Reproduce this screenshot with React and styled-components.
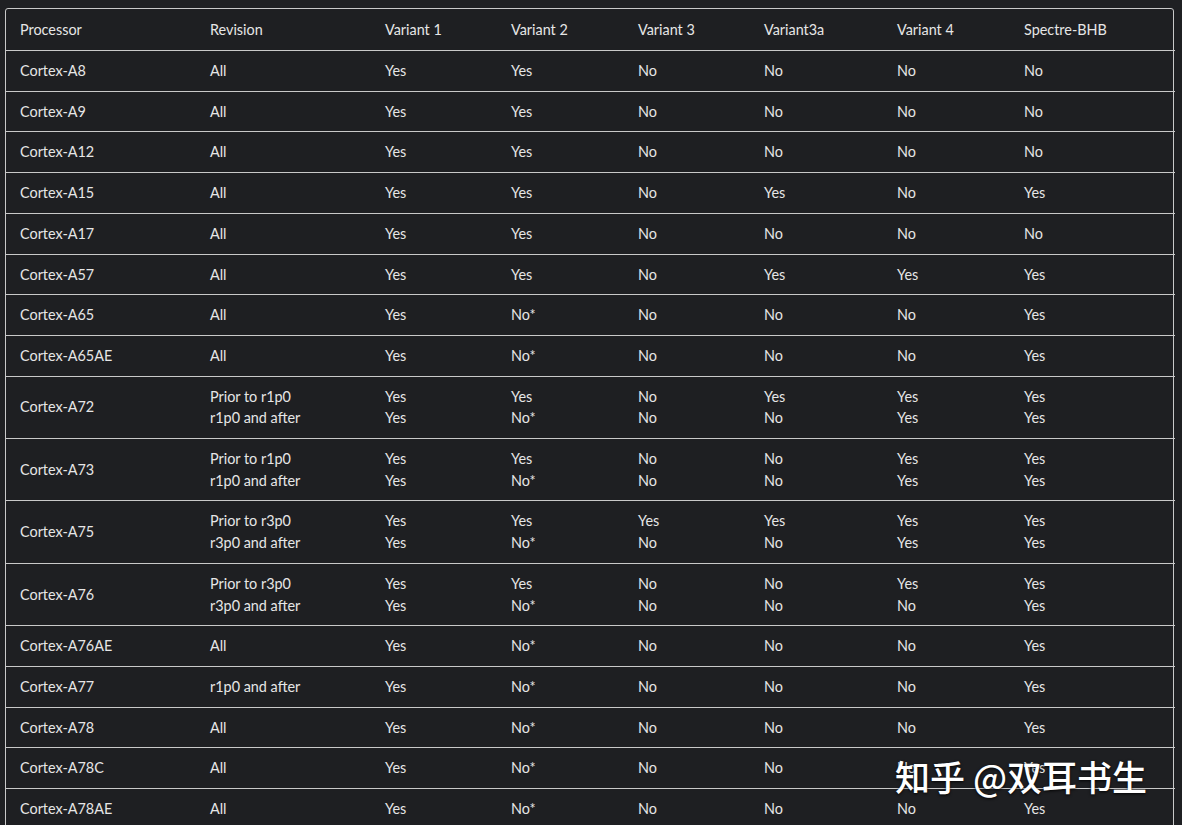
import React from "react";
import styled, { createGlobalStyle } from "styled-components";

const Global = createGlobalStyle`
  body { margin: 0; background: #1f2023; font-family: Lato, "Noto Sans", sans-serif; }
`;
const Page = styled.div`
  padding: 8px 8px 0 5px; height: 825px; box-sizing: border-box; overflow: hidden; position: relative;
`;
const Wrap = styled.div`
  border: 1px solid #c9c9c9; border-radius: 3px; background: #1e1f22;
`;
const Table = styled.table`
  border-collapse: collapse; width: 100%; table-layout: fixed;
  color: #e6e6e6; font-size: 14.4px;
`;
const Td = styled.td`
  padding: 9px 14px; line-height: 21.7px; vertical-align: middle;
  border-top: 1px solid #c9c9c9;
`;
const Th = styled.th`
  padding: 10px 14px; line-height: 21px; text-align: left; font-weight: 400;
`;
const Mark = styled.div`
  position: absolute; left: 895px; top: 750px;
  font-family: "Noto Sans CJK SC", sans-serif; font-size: 35px; font-weight: 500; color: #fff;
  text-shadow: 0 1px 3px rgba(0,0,0,0.9);
`;

const widths = [190, 175, 126, 127, 126, 133, 127, 165];
const head = ["Processor","Revision","Variant 1","Variant 2","Variant 3","Variant3a","Variant 4","Spectre-BHB"];
const rows = [
  ["Cortex-A8","All","Yes","Yes","No","No","No","No"],
  ["Cortex-A9","All","Yes","Yes","No","No","No","No"],
  ["Cortex-A12","All","Yes","Yes","No","No","No","No"],
  ["Cortex-A15","All","Yes","Yes","No","Yes","No","Yes"],
  ["Cortex-A17","All","Yes","Yes","No","No","No","No"],
  ["Cortex-A57","All","Yes","Yes","No","Yes","Yes","Yes"],
  ["Cortex-A65","All","Yes","No*","No","No","No","Yes"],
  ["Cortex-A65AE","All","Yes","No*","No","No","No","Yes"],
  ["Cortex-A72",["Prior to r1p0","r1p0 and after"],["Yes","Yes"],["Yes","No*"],["No","No"],["Yes","No"],["Yes","Yes"],["Yes","Yes"]],
  ["Cortex-A73",["Prior to r1p0","r1p0 and after"],["Yes","Yes"],["Yes","No*"],["No","No"],["No","No"],["Yes","Yes"],["Yes","Yes"]],
  ["Cortex-A75",["Prior to r3p0","r3p0 and after"],["Yes","Yes"],["Yes","No*"],["Yes","No"],["Yes","No"],["Yes","Yes"],["Yes","Yes"]],
  ["Cortex-A76",["Prior to r3p0","r3p0 and after"],["Yes","Yes"],["Yes","No*"],["No","No"],["No","No"],["Yes","No"],["Yes","Yes"]],
  ["Cortex-A76AE","All","Yes","No*","No","No","No","Yes"],
  ["Cortex-A77","r1p0 and after","Yes","No*","No","No","No","Yes"],
  ["Cortex-A78","All","Yes","No*","No","No","No","Yes"],
  ["Cortex-A78C","All","Yes","No*","No","No","No","Yes"],
  ["Cortex-A78AE","All","Yes","No*","No","No","No","Yes"],
];

export default function App() {
  return (
    <Page>
      <Global />
      <Wrap>
        <Table>
          <colgroup>{widths.map((w, i) => <col key={i} style={{ width: w }} />)}</colgroup>
          <thead><tr>{head.map(h => <Th key={h}>{h}</Th>)}</tr></thead>
          <tbody>
            {rows.map((r, i) => (
              <tr key={i}>
                {r.map((c, j) => (
                  <Td key={j}>{Array.isArray(c) ? c.map((l, k) => <div key={k}>{l}</div>) : c}</Td>
                ))}
              </tr>
            ))}
          </tbody>
        </Table>
      </Wrap>
      <Mark>知乎 @双耳书生</Mark>
    </Page>
  );
}
